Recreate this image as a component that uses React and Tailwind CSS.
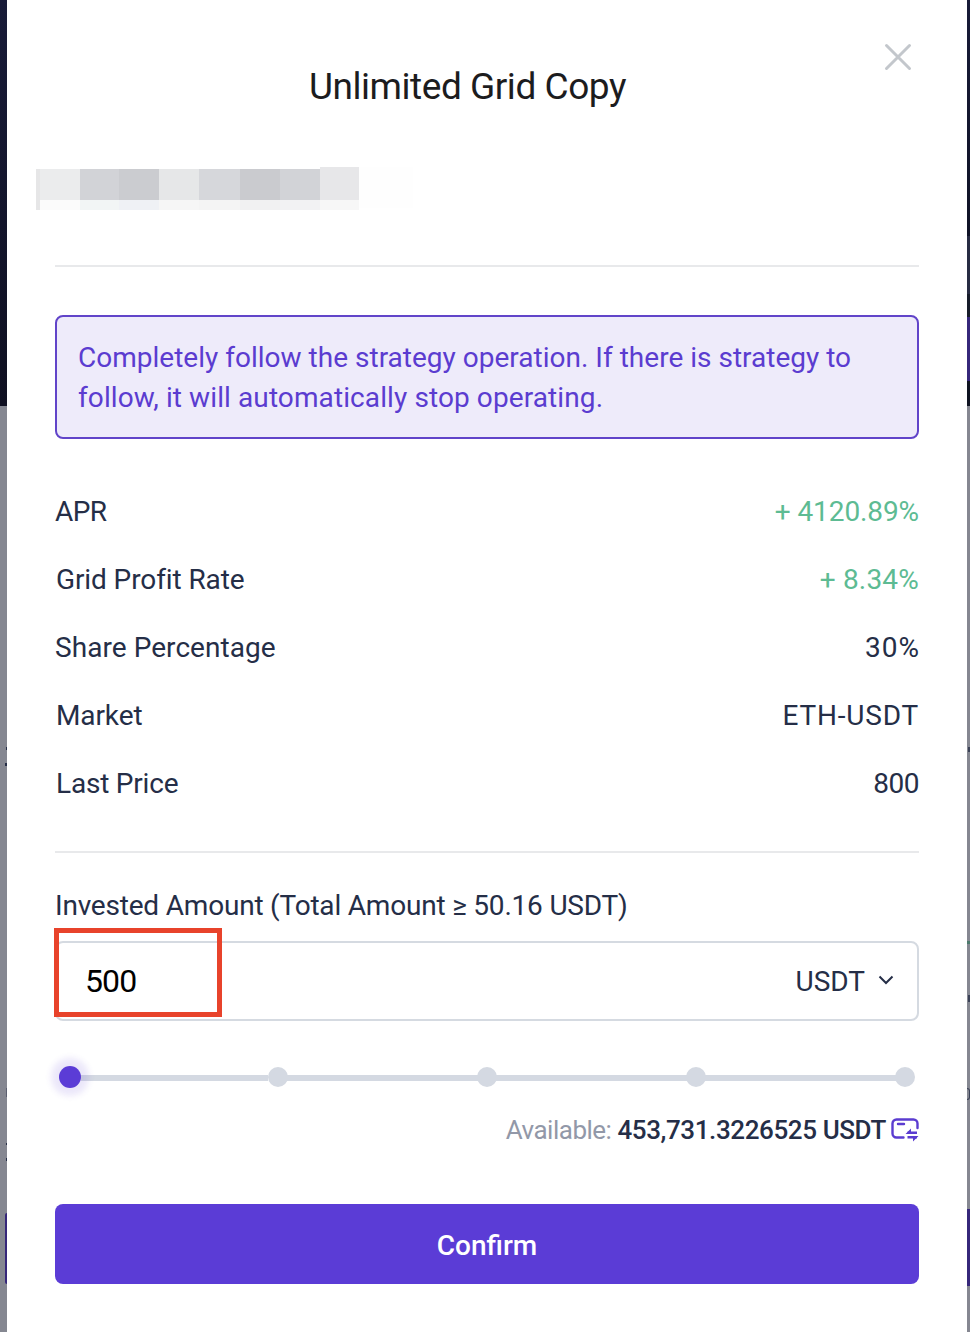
import React from "react";

const rows = [
  { label: "APR", ls: "tracking-[-0.6px]", value: "+ 4120.89%", vc: "text-[#5dbb93] tracking-[-0.1px]" },
  { label: "Grid Profit Rate", ls: "pl-px tracking-[-0.1px]", value: "+ 8.34%", vc: "text-[#5dbb93] tracking-[0.2px]" },
  { label: "Share Percentage", ls: "tracking-[0.06px]", value: "30%", vc: "text-[#252e47] tracking-[1px] -mr-px" },
  { label: "Market", ls: "pl-px tracking-[-0.1px]", value: "ETH-USDT", vc: "text-[#252e47] tracking-[0.8px]" },
  { label: "Last Price", ls: "pl-px tracking-[-0.2px]", value: "800", vc: "text-[#252e47] tracking-[-0.5px]" },
];

const blocks = [
  ["w-1", "bg-[#e6e6e7]", "bg-[#e6e6e7]"],
  ["w-10", "bg-[#ebeced]", "bg-[#fbfbfb]"],
  ["w-[39px]", "bg-[#d2d3d7]", "bg-[#f2f5f5]"],
  ["w-10", "bg-[#cbccd0]", "bg-[#eff1f5]"],
  ["w-10", "bg-[#e6e7e8]", "bg-[#f6f6f6]"],
  ["w-[41px]", "bg-[#d6d7db]", "bg-[#f4f4f4]"],
  ["w-10", "bg-[#cacbcf]", "bg-[#f1f1f2]"],
  ["w-10", "bg-[#d2d3d7]", "bg-[#f2f2f3]"],
];

// Slivers of the dimmed page that stay visible on each side of the dialog.
const leftSlices = [
  "h-[406px] w-full bg-linear-to-b from-[#181b38] to-[#0f1021]",
  "h-[341px]",
  "h-[3px] w-px bg-[#252e47]",
  "h-[13px]",
  "h-[3px] w-[2px] bg-[#252e47]",
  "h-[322px]",
  "h-[9px] w-px bg-[#5b5f70]",
  "h-[46px]",
  "h-[2px] w-px bg-[#252e47]",
  "h-[13px]",
  "h-[3px] w-px bg-[#252e47]",
  "h-[52px]",
  "h-[71px] w-[2px] rounded-l bg-[#36277a]",
];

const rightSlices = [
  "h-[236px] w-full bg-linear-to-b from-[#181b38] to-[#101326]",
  "h-[58px] w-full bg-[#282c43]",
  "h-[23px] w-full bg-[#171c2a]",
  "h-[64px] w-full bg-[#36277a]",
  "h-[25px] w-full bg-[#0f1321]",
  "h-[341px]",
  "h-[5px] w-[2px] bg-[#3b4257]",
  "h-[536px]",
];

const rightLower = [
  "h-[189px]",
  "h-[3px] w-full bg-[#4c7a6c]",
  "h-[51px]",
  "h-[7px] w-[2px] bg-[#3b4257]",
  "h-[86px]",
  "h-[12px] w-full rounded-r border border-l-0 border-[#3b4257]",
  "h-[109px]",
  "h-[77px] w-full bg-[#36277a]",
];

function Edge({ slices, width }) {
  return (
    <aside className={`flex h-full shrink-0 flex-col items-end bg-[#858791] ${width}`}>
      {slices.map((s, i) => (
        <div key={i} className={`shrink-0 ${s}`} />
      ))}
    </aside>
  );
}

function Slider() {
  return (
    <div className="mt-[45px] flex h-[22px] items-center px-1">
      <span className="z-10 size-[22px] rounded-full bg-[#5b3cd6] shadow-[0_0_6px_8px_rgba(91,60,214,0.12)]" />
      <span className="mt-[2px] h-[6px] w-[187px] bg-[#d4d9e2]" />
      {[1, 2, 3].map((n) => (
        <React.Fragment key={n}>
          <span className="size-5 rounded-full bg-[#d4d9e2]" />
          <span className="-mx-px mt-[2px] h-[6px] flex-1 bg-[#d4d9e2]" />
        </React.Fragment>
      ))}
      <span className="size-5 rounded-full bg-[#d4d9e2]" />
    </div>
  );
}

export default function App() {
  return (
    <div className="flex h-[1332px] w-[970px] overflow-hidden font-['Roboto',sans-serif] text-[28px] text-[#252e47]">
      <Edge slices={leftSlices} width="w-[7px]" />
      <main className="h-full w-[960px] bg-white px-12">
        <header className="flex h-[167px] items-start justify-between pl-[254px] pr-[7px]">
          <h1 className="whitespace-nowrap pt-[62px] text-[37px] leading-[50px] tracking-[-0.46px] text-[#1c1c1e]">Unlimited Grid Copy</h1>
          <button aria-label="Close" className="pt-[43px]">
            <svg className="block" width="28" height="28" viewBox="0 0 28 28" fill="none" stroke="#c3c7cc" strokeWidth="3" strokeLinecap="round">
              <path d="M2.500 2.500l23 23M25.500 2.500l-23 23" />
            </svg>
          </button>
        </header>

        <div className="-ml-[19px] flex h-[98px] items-start">
          {blocks.map(([w, top, bottom], i) => (
            <div key={i} className={`mt-[2px] h-[41px] ${w} ${bottom}`}>
              <div className={`h-[31px] ${top}`} />
            </div>
          ))}
          <div className="h-[43px] w-[39px] bg-[#f7f7f7]">
            <div className="h-[33px] bg-[#e7e7e9]" />
          </div>
          <div className="h-[41px] w-[54px] bg-[#fefefe]" />
        </div>

        <hr className="border-t-2 border-[#e8e9eb]" />

        <div className="mt-[48px] h-[124px] rounded-lg border-2 border-[#6144c9] bg-[#eeebfa] pl-[21px] pt-[21px] leading-[40px] text-[#5b3cd0]">
          <p className="whitespace-nowrap tracking-[0.01px]">Completely follow the strategy operation. If there is strategy to</p>
          <p className="whitespace-nowrap tracking-[0.1px]">follow, it will automatically stop operating.</p>
        </div>

        <dl className="h-[412px] pt-[39px]">
          {rows.map((r) => (
            <div key={r.label} className="flex h-[68px] items-center justify-between whitespace-nowrap">
              <dt className={r.ls}>{r.label}</dt>
              <dd className={r.vc}>{r.value}</dd>
            </div>
          ))}
        </dl>

        <hr className="border-t-2 border-[#e8e9eb]" />

        <label className="mt-[33px] block h-[55px] whitespace-nowrap leading-[40px] tracking-[-0.2px]">Invested Amount (Total Amount ≥ 50.16 USDT)</label>
        <div className="relative flex h-[80px] items-center rounded-lg border-2 border-[#d5dae1] pl-[28px] pr-[23px]">
          <span className="text-[32px] tracking-[-0.9px] text-black">500</span>
          <span className="ml-auto pt-[2px]">USDT</span>
          <svg className="ml-[13px] -mt-[2px]" width="16" height="10" viewBox="0 0 16 10" fill="none" stroke="#252e47" strokeWidth="2">
            <path d="M1.500 1.500L8 8l6.500-6.500" />
          </svg>
          <div className="absolute -left-[3px] -top-[15px] h-[89px] w-[168px] border-[5px] border-[#e8432b]" />
        </div>

        <Slider />

        <div className="mt-[22px] flex h-[40px] items-center justify-end whitespace-nowrap text-[26px]">
          <span className="pt-px tracking-[-0.5px] text-[#9298a8]">Available:</span>
          <span className="ml-[6px] font-medium tracking-[-0.4px]">453,731.3226525 USDT</span>
          <svg className="-mt-px ml-[5px]" width="28" height="24" viewBox="0 0 28 24" fill="none" stroke="#5b3cd0" strokeWidth="2.4" strokeLinecap="round">
            <path d="M12.500 19.500H5.500a4 4 0 0 1-4-4V5.500a4 4 0 0 1 4-4H22.500a4 4 0 0 1 4 4V10M7 6h6" />
            <path d="M16.500 14.700H26M16.500 19.200H26" strokeLinecap="butt" strokeWidth="2.4" />
            <path d="M14.500 15.900L20 10.500v5.400zM27.500 18L22 23.500V18z" fill="#5b3cd0" stroke="none" />
          </svg>
        </div>

        <button className="mt-[54px] block h-[80px] w-full rounded-lg bg-[#5b3cd6] pt-[3px] font-medium text-white">Confirm</button>
      </main>
      <Edge slices={[...rightSlices.slice(0, -1), ...rightLower]} width="w-[3px]" />
    </div>
  );
}
